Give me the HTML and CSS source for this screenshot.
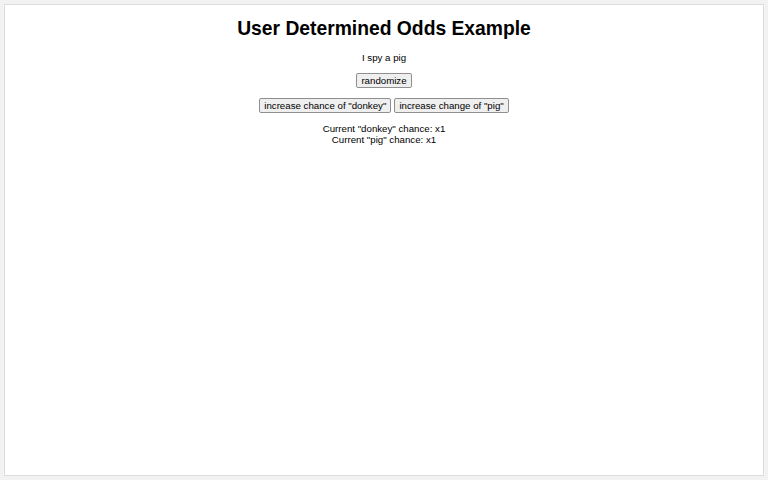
FILE: index.html
```html
<!DOCTYPE html>
<html>
<head>
<meta charset="utf-8">
<link rel="stylesheet" href="styles.css">
</head>
<body>
<div class="panel">
  <h1 class="title">User Determined Odds Example</h1>
  <p class="result">I spy a pig</p>
  <div class="row"><button class="btn">randomize</button></div>
  <div class="row"><button class="btn">increase chance of "donkey"</button><button class="btn">increase change of "pig"</button></div>
  <div class="stats">
    <div>Current "donkey" chance: x1</div>
    <div>Current "pig" chance: x1</div>
  </div>
</div>
</body>
</html>
```

FILE: styles.css
```css
html, body {
  margin: 0;
  padding: 0;
}
body {
  background: #f2f2f2;
  padding: 4px;
  font-family: "Liberation Sans", Arial, sans-serif;
  color: #000;
}
.panel {
  background: #fff;
  border: 1px solid #dcdcdc;
  height: 472px;
  box-sizing: border-box;
  text-align: center;
  padding-top: 1px;
}
.title {
  font-size: 19.3px;
  font-weight: bold;
  margin: 11px 0 0 0;
  line-height: 24px;
}
.result {
  font-size: 9.7px;
  line-height: 12px;
  margin: 11px 0 0 0;
}
.row {
  margin-top: 9px;
  display: flex;
  justify-content: center;
  gap: 3px;
}
.row + .row {
  margin-top: 10px;
}
.btn {
  font-family: "Liberation Sans", Arial, sans-serif;
  font-size: 9.7px;
  line-height: 11px;
  height: 15px;
  padding: 0 4px;
  margin: 0;
  background: #efefef;
  border: 1px solid #8f8f8f;
  border-radius: 2px;
  color: #000;
}
.stats {
  font-size: 9.7px;
  line-height: 11px;
  margin-top: 10px;
}
```
